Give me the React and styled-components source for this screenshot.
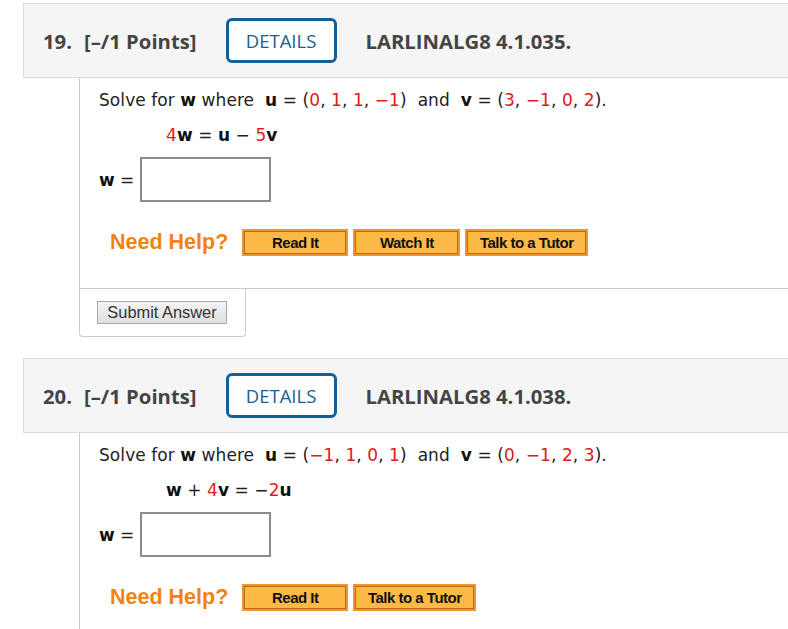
import React from 'react';
import styled, { createGlobalStyle } from 'styled-components';

const Global = createGlobalStyle`
  body {
    margin: 0;
    background: #fff;
    font-family: "DejaVu Sans", Verdana, sans-serif;
  }
`;

const Page = styled.div`
  width: 788px;
  height: 629px;
  overflow: hidden;
  padding-top: 3px;
  box-sizing: border-box;
`;

const Question = styled.div`
  margin-bottom: 21px;
`;

const Header = styled.div`
  margin-left: 23px;
  height: 73px;
  width: 800px;
  background: #f5f5f5;
  border: 1px solid #dcdcdc;
  border-right: none;
  display: flex;
  align-items: center;
  padding-left: 19px;
  font-family: "Open Sans", sans-serif;
  font-weight: 700;
  font-size: 20.3px;
  color: #444;
`;

const Num = styled.span`
  margin-right: 12px;
`;

const Points = styled.span`
  margin-right: 29px;
`;

const Details = styled.div`
  width: 111px;
  height: 45px;
  box-sizing: border-box;
  border: 3px solid #11609a;
  border-radius: 6px;
  background: #fff;
  display: flex;
  align-items: center;
  justify-content: center;
  font-weight: 400;
  font-size: 18.5px;
  color: #1a5f8e;
  margin-right: 29px;
`;

const Body = styled.div`
  margin-left: 79px;
  border-left: 1px solid #ccc;
  border-bottom: ${p => (p.closed ? '1px solid #ccc' : 'none')};
  padding: 12px 0 0 19px;
  height: ${p => p.h}px;
  box-sizing: border-box;
  font-size: 17px;
  color: #222;
`;

const Line = styled.div`
  line-height: 20px;
  white-space: pre;
  letter-spacing: 0.07px;
`;

const Eq = styled(Line)`
  margin: 15px 0 0 67px;
`;

const B = styled.b`
  color: #111;
`;

const R = styled.span`
  color: #e0191b;
`;

const AnswerRow = styled.div`
  display: flex;
  align-items: center;
  margin-top: ${p => p.top}px;
`;

const Input = styled.div`
  width: 131px;
  height: 45px;
  box-sizing: border-box;
  border: 2px solid #8c8c8c;
  margin-left: 6px;
  background: #fff;
`;

const Help = styled.div`
  display: flex;
  align-items: center;
  margin: ${p => p.top}px 0 0 11px;
`;

const HelpLabel = styled.span`
  font-family: "Liberation Sans", Arial, sans-serif;
  font-weight: 700;
  font-size: 21.5px;
  color: #ee8411;
  margin-right: 14px;
`;

const HelpButton = styled.div`
  width: ${p => p.w}px;
  height: 27px;
  box-sizing: border-box;
  border: 2px solid #f3932c;
  background: #f3932c;
  margin-right: 5px;
  display: flex;
`;

const HelpInner = styled.div`
  flex: 1;
  border: 1px solid #b86a18;
  background: #fdb946;
  display: flex;
  align-items: center;
  justify-content: center;
  font-family: "Liberation Sans", Arial, sans-serif;
  font-weight: 700;
  font-size: 15px;
  letter-spacing: -0.5px;
  color: #111;
`;

const SubmitBox = styled.div`
  margin-left: 79px;
  width: 167px;
  height: 48px;
  box-sizing: border-box;
  border: 1px solid #ccc;
  border-top: none;
  border-radius: 0 0 4px 4px;
  padding: 12px 0 0 17px;
`;

const Submit = styled.div`
  width: 130px;
  height: 23px;
  box-sizing: border-box;
  border: 1px solid #a8a8a8;
  background: linear-gradient(#f4f4f4, #dedede);
  font-family: "Liberation Sans", Arial, sans-serif;
  font-size: 16.4px;
  color: #333;
  display: flex;
  align-items: center;
  justify-content: center;
`;

function HelpRow({ top, buttons }) {
  const widths = { 'Read It': 106, 'Watch It': 107, 'Talk to a Tutor': 123 };
  return (
    <Help top={top}>
      <HelpLabel>Need Help?</HelpLabel>
      {buttons.map(b => (
        <HelpButton key={b} w={widths[b]}>
          <HelpInner>{b}</HelpInner>
        </HelpButton>
      ))}
    </Help>
  );
}

function Head({ num, code }) {
  return (
    <Header>
      <Num>{num}.</Num>
      <Points>[–/1 Points]</Points>
      <Details>DETAILS</Details>
      <span>{code}</span>
    </Header>
  );
}

export default function App() {
  return (
    <Page>
      <Global />
      <Question>
        <Head num="19" code="LARLINALG8 4.1.035." />
        <Body h={211} closed>
          <Line>
            Solve for <B>w</B> where  <B>u</B> = (<R>0</R>, <R>1</R>, <R>1</R>, <R>−1</R>)  and  <B>v</B> = (<R>3</R>, <R>−1</R>, <R>0</R>, <R>2</R>).
          </Line>
          <Eq>
            <R>4</R><B>w</B> = <B>u</B> − <R>5</R><B>v</B>
          </Eq>
          <AnswerRow top={12}>
            <B>w</B>&nbsp;=
            <Input />
          </AnswerRow>
          <HelpRow top={27} buttons={['Read It', 'Watch It', 'Talk to a Tutor']} />
        </Body>
        <SubmitBox>
          <Submit>Submit Answer</Submit>
        </SubmitBox>
      </Question>
      <Question>
        <Head num="20" code="LARLINALG8 4.1.038." />
        <Body h={200}>
          <Line>
            Solve for <B>w</B> where  <B>u</B> = (<R>−1</R>, <R>1</R>, <R>0</R>, <R>1</R>)  and  <B>v</B> = (<R>0</R>, <R>−1</R>, <R>2</R>, <R>3</R>).
          </Line>
          <Eq>
            <B>w</B> + <R>4</R><B>v</B> = −<R>2</R><B>u</B>
          </Eq>
          <AnswerRow top={12}>
            <B>w</B>&nbsp;=
            <Input />
          </AnswerRow>
          <HelpRow top={27} buttons={['Read It', 'Talk to a Tutor']} />
        </Body>
      </Question>
    </Page>
  );
}
